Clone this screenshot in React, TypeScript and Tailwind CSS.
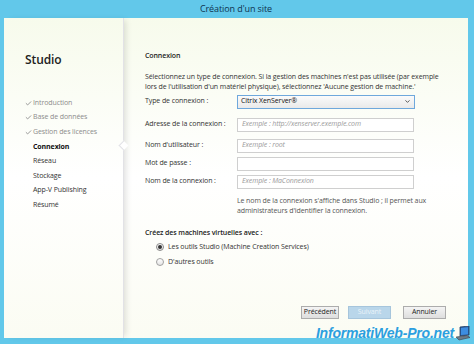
import { Check, ChevronDown } from 'lucide-react'

const steps = [
  { label: 'Introduction', done: true },
  { label: 'Base de données', done: true },
  { label: 'Gestion des licences', done: true },
  { label: 'Connexion', current: true },
  { label: 'Réseau' },
  { label: 'Stockage' },
  { label: 'App-V Publishing' },
  { label: 'Résumé' },
]

function Field({ label, placeholder, top }: { label: string; placeholder?: string; top: string }) {
  return (
    <div className={`flex items-center ${top}`}>
      <span className="w-[92px] shrink-0">{label}</span>
      <div className="w-[177px] h-[14px] border border-[#cfcfcf] bg-white flex items-center px-[4px] italic text-[#9a9a9a]">
        {placeholder}
      </div>
    </div>
  )
}

export default function App() {
  return (
    <div
      className="relative w-[474px] h-[344px] bg-[#62c8ea] flex flex-col pl-[4px] pr-[6px] pb-[6px] text-[7px] tracking-[-0.1px] text-[#333]"
      style={{ fontFamily: '"Open Sans", "Noto Sans", sans-serif' }}
    >
      <div className="h-[18px] flex items-center justify-center">
        <span className="text-[9px] text-[#0e3350]">Création d'un site</span>
      </div>

      <div className="flex-1 flex bg-gradient-to-b from-[#f7fbec] via-white to-[#fbfcf3]">
        {/* sidebar */}
        <div className="relative w-[120px] shrink-0 border-r border-[#e2e2e6] shadow-[4px_0_6px_-2px_rgba(0,0,0,0.12)] pl-[21px]">
          <div className="mt-[33px] text-[12px] font-semibold text-[#222]">Studio</div>
          <div className="mt-[29px] flex flex-col gap-[4.6px]">
            {steps.map((s) => (
              <div key={s.label} className="flex items-center h-[10px]">
                <span className="w-[8px] shrink-0">
                  {s.done && <Check className="w-[7px] h-[7px] text-[#8a8a8a]" strokeWidth={3} />}
                </span>
                <span
                  className={
                    s.done
                      ? 'text-[#8c8c8c]'
                      : s.current
                        ? 'font-bold text-[#111]'
                        : 'text-[#333]'
                  }
                >
                  {s.label}
                </span>
              </div>
            ))}
          </div>
          <div className="absolute right-[-4px] top-[124px] w-[7px] h-[7px] bg-white rotate-45 border-l border-b border-[#e2e2e6]" />
        </div>

        {/* content */}
        <div className="flex-1 pl-[21px] pr-[16px] relative">
          <div className="mt-[33px] font-semibold text-[#222]">Connexion</div>
          <p className="mt-[10px] leading-[10px] text-[#333]">
            Sélectionnez un type de connexion. Si la gestion des machines n'est pas utilisée (par exemple
            <br />
            lors de l'utilisation d'un matériel physique), sélectionnez 'Aucune gestion de machine.'
          </p>
          <div className="flex items-center mt-[3px]">
            <span className="w-[92px] shrink-0">Type de connexion :</span>
            <div className="w-[178px] h-[14px] border border-[#6fa8dc] bg-gradient-to-b from-[#fbfbfb] to-[#e9e9e9] flex items-center justify-between px-[3px] text-[#111]">
              <span>Citrix XenServer®</span>
              <ChevronDown className="w-[7px] h-[7px] text-[#444]" strokeWidth={3} />
            </div>
          </div>
          <Field label="Adresse de la connexion :" placeholder="Exemple : http://xenserver.exemple.com" top="mt-[9px]" />
          <Field label="Nom d'utilisateur :" placeholder="Exemple : root" top="mt-[7px]" />
          <Field label="Mot de passe :" top="mt-[4px]" />
          <Field label="Nom de la connexion :" placeholder="Exemple : MaConnexion" top="mt-[4px]" />
          <p className="mt-[7px] ml-[92px] leading-[10px] text-[#555]">
            Le nom de la connexion s'affiche dans Studio ; il permet aux
            <br />
            administrateurs d'identifier la connexion.
          </p>
          <div className="mt-[12px] font-semibold text-[#222]">Créez des machines virtuelles avec :</div>
          <div className="mt-[4px] ml-[11px] flex flex-col gap-[5px]">
            <label className="flex items-center gap-[4px] h-[10px]">
              <span className="w-[8px] h-[8px] rounded-full border border-[#8a8a8a] bg-gradient-to-b from-white to-[#e4e4e4] flex items-center justify-center">
                <span className="w-[4px] h-[4px] rounded-full bg-[#333]" />
              </span>
              Les outils Studio (Machine Creation Services)
            </label>
            <label className="flex items-center gap-[4px] h-[10px]">
              <span className="w-[8px] h-[8px] rounded-full border border-[#a0a0a0] bg-gradient-to-b from-white to-[#e4e4e4]" />
              D'autres outils
            </label>
          </div>

          <div className="absolute left-[177px] top-[288px] flex gap-[9px]">
            <button className="w-[38px] h-[13px] border border-[#acacac] bg-gradient-to-b from-[#f4f4f4] to-[#dedede] text-[7px] text-[#222] flex items-center justify-center">
              Précédent
            </button>
            <button className="w-[43px] h-[13px] border border-[#a6c5dc] bg-[#b9d6ea] text-[7px] text-[#e9f3f9] flex items-center justify-center">
              Suivant
            </button>
            <button className="ml-[3px] w-[43px] h-[13px] border border-[#acacac] bg-gradient-to-b from-[#f4f4f4] to-[#dedede] text-[7px] text-[#222] flex items-center justify-center">
              Annuler
            </button>
          </div>
        </div>
      </div>

      {/* watermark */}
      <div className="absolute right-[3px] bottom-[3px] flex items-end gap-[1px]">
        <span
          className="italic font-bold text-[14px] leading-[15px] text-[#2b9fe0] tracking-[-0.2px]"
          style={{ fontFamily: '"Liberation Sans", Arial, sans-serif' }}
        >
          InformatiWeb-Pro.net
        </span>
        <svg width="16" height="15" viewBox="0 0 16 15">
          <path d="M5 1 L14 0 L14 9 L5 10 Z" fill="#2f5f9e" stroke="#1d3c66" strokeWidth="0.8" />
          <path d="M6 2 L13 1.2 L13 8.3 L6 9 Z" fill="#3d8de0" />
          <path d="M1 11 L12 9.5 L15 11.5 L4 14 Z" fill="#6c7a88" stroke="#37414b" strokeWidth="0.6" />
        </svg>
      </div>
    </div>
  )
}
